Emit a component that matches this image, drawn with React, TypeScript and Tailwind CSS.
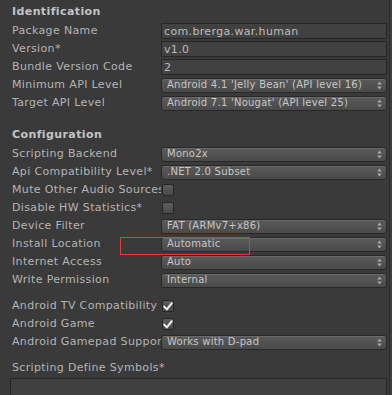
import React from 'react';

const font = { fontFamily: '"DejaVu Sans", Verdana, sans-serif' };

function Arrows() {
  return (
    <svg width="5" height="9" viewBox="0 0 5 9" className="shrink-0">
      <path d="M2.5 0.5 L4.8 3.5 L0.2 3.5 Z" fill="#a8a8a8" />
      <path d="M2.5 8.5 L4.8 5.5 L0.2 5.5 Z" fill="#a8a8a8" />
    </svg>
  );
}

function Header({ title }: { title: string }) {
  return (
    <div className="h-[22px] flex items-center pl-3 pt-[2px] text-[11px] font-bold tracking-[0.4px] text-[#c4c4c4]">{title}</div>
  );
}

function Row({ label, children }: { label: string; children?: React.ReactNode }) {
  return (
    <div className="h-[18px] flex items-center">
      <div className="w-[149px] ml-3 overflow-hidden whitespace-nowrap text-[11px] tracking-[0.35px] text-[#b4b4b4] leading-[18px]">{label}</div>
      <div className="flex-1 flex items-center h-full">{children}</div>
    </div>
  );
}

function TextField({ value }: { value: string }) {
  return (
    <div className="w-full h-[16px] bg-[#414141] border border-[#262626] flex items-center px-[2px] text-[11px] tracking-[0.35px] text-[#bcbcbc] leading-none">
      {value}
    </div>
  );
}

function Dropdown({ value }: { value: string }) {
  return (
    <div className="w-full h-[15px] rounded-[3px] bg-gradient-to-b from-[#5a5a5a] to-[#4a4a4a] border border-[#282828] shadow-[inset_0_1px_0_#6a6a6a] flex items-center pl-[5px] pr-[4px] text-[10px] tracking-[0.25px] text-[#c6c6c6] leading-none">
      <span className="flex-1 whitespace-nowrap overflow-hidden">{value}</span>
      <Arrows />
    </div>
  );
}

function Checkbox({ checked }: { checked?: boolean }) {
  return (
    <div className="ml-[1px] w-[12px] h-[12px] rounded-[2px] bg-gradient-to-b from-[#5c5c5c] to-[#4a4a4a] border border-[#262626] flex items-center justify-center">
      {checked && (
        <svg width="10" height="9" viewBox="0 0 10 9">
          <path d="M1.2 4.6 L3.8 7.4 L8.8 1.2" stroke="#f0f0f0" strokeWidth="2" fill="none" strokeLinecap="round" strokeLinejoin="round" />
        </svg>
      )}
    </div>
  );
}

export default function App() {
  return (
    <div className="w-[392px] h-[395px] overflow-hidden bg-[#3a3a3a] flex" style={font}>
      <div className="flex-1 pr-[2px] relative">
        <Header title="Identification" />
        <Row label="Package Name"><TextField value="com.brerga.war.human" /></Row>
        <Row label="Version*"><TextField value="v1.0" /></Row>
        <Row label="Bundle Version Code"><TextField value="2" /></Row>
        <Row label="Minimum API Level"><Dropdown value="Android 4.1 'Jelly Bean' (API level 16)" /></Row>
        <Row label="Target API Level"><Dropdown value="Android 7.1 'Nougat' (API level 25)" /></Row>

        <div className="mt-[11px]">
          <Header title="Configuration" />
        </div>
        <Row label="Scripting Backend"><Dropdown value="Mono2x" /></Row>
        <Row label="Api Compatibility Level*"><Dropdown value=".NET 2.0 Subset" /></Row>
        <Row label="Mute Other Audio Sources*"><Checkbox /></Row>
        <Row label="Disable HW Statistics*"><Checkbox /></Row>
        <Row label="Device Filter"><Dropdown value="FAT (ARMv7+x86)" /></Row>
        <Row label="Install Location"><Dropdown value="Automatic" /></Row>
        <Row label="Internet Access"><Dropdown value="Auto" /></Row>
        <Row label="Write Permission"><Dropdown value="Internal" /></Row>

        <div className="mt-[8px]">
          <Row label="Android TV Compatibility"><Checkbox checked /></Row>
          <Row label="Android Game"><Checkbox checked /></Row>
          <Row label="Android Gamepad Support Level"><Dropdown value="Works with D-pad" /></Row>
        </div>

        <div className="mt-[8px] h-[18px] flex items-center pl-3 text-[11px] tracking-[0.35px] text-[#b4b4b4]">Scripting Define Symbols*</div>
        <div className="ml-[10px] mt-[1px] h-[20px] bg-[#3f3f3f] border border-[#262626]" />

        {/* highlight box */}
        <div className="absolute left-[120px] top-[237px] w-[130px] h-[18px] border border-[#e8393a]" />
      </div>
      <div className="w-[1px] bg-[#2a2a2a]" />
      <div className="w-[2px] bg-[#3e3e3e]" />
    </div>
  );
}
